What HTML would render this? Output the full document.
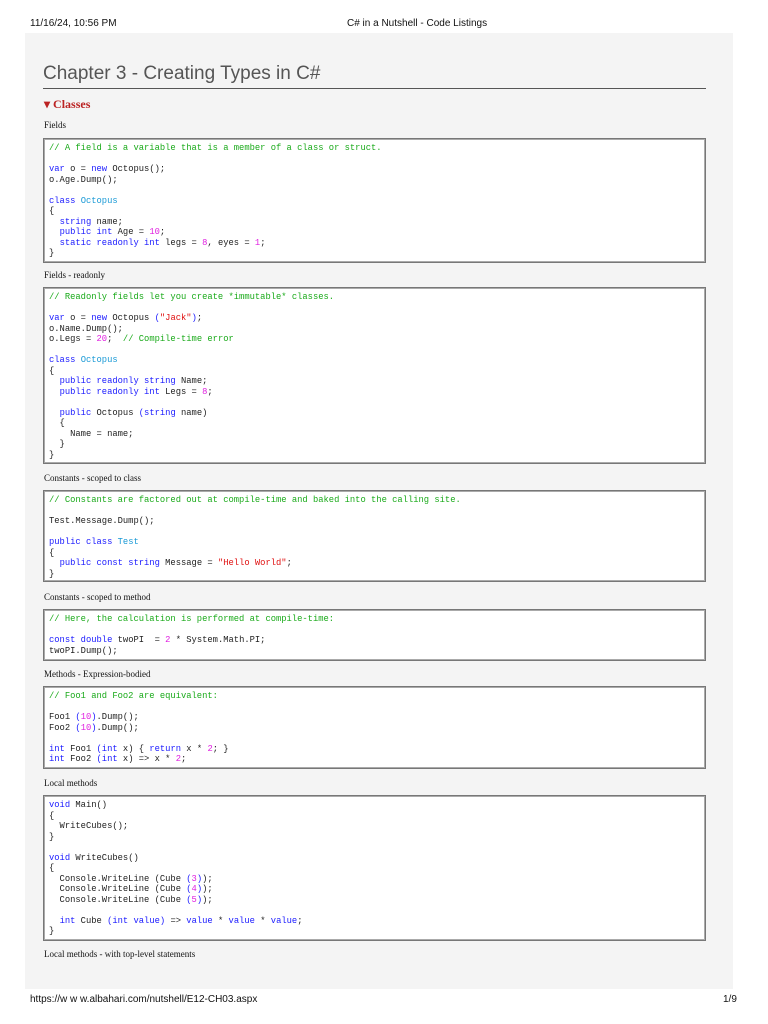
<!DOCTYPE html>
<html><head><meta charset="utf-8"><style>
body{margin:0;width:768px;height:1024px;background:#fff;position:relative;font-family:"Liberation Serif",serif;overflow:hidden}
.hdr{position:absolute;font-family:"Liberation Sans",sans-serif;font-size:10px;color:#111}
.page{position:absolute;left:25px;top:33px;width:708px;height:956px;background:#f4f4f4}
h1{position:absolute;left:43px;top:61px;margin:0;font-family:"Liberation Sans",sans-serif;font-weight:normal;font-size:19px;color:#555;width:663px;border-bottom:1px solid #555;padding-bottom:1px;line-height:26px}
.sec{position:absolute;left:44px;top:97px;color:#b22;font-weight:bold;font-size:12px}
.lbl{position:absolute;left:44px;font-size:9px;color:#111}
.box{position:absolute;left:43px;width:663px;background:#fff;border:1px solid #777;box-shadow:inset 0 0 0 1px #aaa;padding:4px 0 0 5px;font-family:"Liberation Mono",monospace;font-size:8.8px;line-height:10.5px;white-space:pre;color:#222;box-sizing:border-box}
.k{color:#1a1aff}.c{color:#1aaa1a}.t{color:#1a9ad6}.n{color:#e020e0}.s{color:#e01010}
</style></head><body>
<div class="hdr" style="left:30px;top:18px">11/16/24, 10:56 PM</div>
<div class="hdr" style="left:347px;top:18px">C# in a Nutshell - Code Listings</div>
<div class="page"></div>
<h1>Chapter 3 - Creating Types in C#</h1>
<div class="sec">▾ Classes</div>
<div class="lbl" style="top:120px">Fields</div>
<div class="box" style="top:138px;height:125px"><span class="c">// A field is a variable that is a member of a class or struct.</span>

<span class="k">var</span> o = <span class="k">new</span> Octopus();
o.Age.Dump();

<span class="k">class</span> <span class="t">Octopus</span>
{
  <span class="k">string</span> name;
  <span class="k">public int</span> Age = <span class="n">10</span>;
  <span class="k">static readonly int</span> legs = <span class="n">8</span>, eyes = <span class="n">1</span>;
}</div>
<div class="lbl" style="top:270px">Fields - readonly</div>
<div class="box" style="top:287px;height:177px"><span class="c">// Readonly fields let you create *immutable* classes.</span>

<span class="k">var</span> o = <span class="k">new</span> Octopus <span class="k">(</span><span class="s">"Jack"</span><span class="k">)</span>;
o.Name.Dump();
o.Legs = <span class="n">20</span>;  <span class="c">// Compile-time error</span>

<span class="k">class</span> <span class="t">Octopus</span>
{
  <span class="k">public readonly string</span> Name;
  <span class="k">public readonly int</span> Legs = <span class="n">8</span>;

  <span class="k">public</span> Octopus <span class="k">(string</span> name)
  {
    Name = name;
  }
}</div>
<div class="lbl" style="top:473px">Constants - scoped to class</div>
<div class="box" style="top:490px;height:92px"><span class="c">// Constants are factored out at compile-time and baked into the calling site.</span>

Test.Message.Dump();

<span class="k">public class</span> <span class="t">Test</span>
{
  <span class="k">public const string</span> Message = <span class="s">"Hello World"</span>;
}</div>
<div class="lbl" style="top:592px">Constants - scoped to method</div>
<div class="box" style="top:609px;height:52px"><span class="c">// Here, the calculation is performed at compile-time:</span>

<span class="k">const double</span> twoPI  = <span class="n">2</span> * System.Math.PI;
twoPI.Dump();</div>
<div class="lbl" style="top:669px">Methods - Expression-bodied</div>
<div class="box" style="top:686px;height:83px"><span class="c">// Foo1 and Foo2 are equivalent:</span>

Foo1 <span class="k">(</span><span class="n">10</span><span class="k">)</span>.Dump();
Foo2 <span class="k">(</span><span class="n">10</span><span class="k">)</span>.Dump();

<span class="k">int</span> Foo1 <span class="k">(int</span> x) { <span class="k">return</span> x * <span class="n">2</span>; }
<span class="k">int</span> Foo2 <span class="k">(int</span> x) =&gt; x * <span class="n">2</span>;</div>
<div class="lbl" style="top:778px">Local methods</div>
<div class="box" style="top:795px;height:146px"><span class="k">void</span> Main()
{
  WriteCubes();
}

<span class="k">void</span> WriteCubes()
{
  Console.WriteLine (Cube <span class="k">(</span><span class="n">3</span><span class="k">)</span>);
  Console.WriteLine (Cube <span class="k">(</span><span class="n">4</span><span class="k">)</span>);
  Console.WriteLine (Cube <span class="k">(</span><span class="n">5</span><span class="k">)</span>);

  <span class="k">int</span> Cube <span class="k">(int value)</span> =&gt; <span class="k">value</span> * <span class="k">value</span> * <span class="k">value</span>;
}</div>
<div class="lbl" style="top:949px">Local methods  - with top-level statements</div>
<div class="hdr" style="left:30px;top:994px">https://w w w.albahari.com/nutshell/E12-CH03.aspx</div>
<div class="hdr" style="left:723px;top:994px">1/9</div>
</body></html>
